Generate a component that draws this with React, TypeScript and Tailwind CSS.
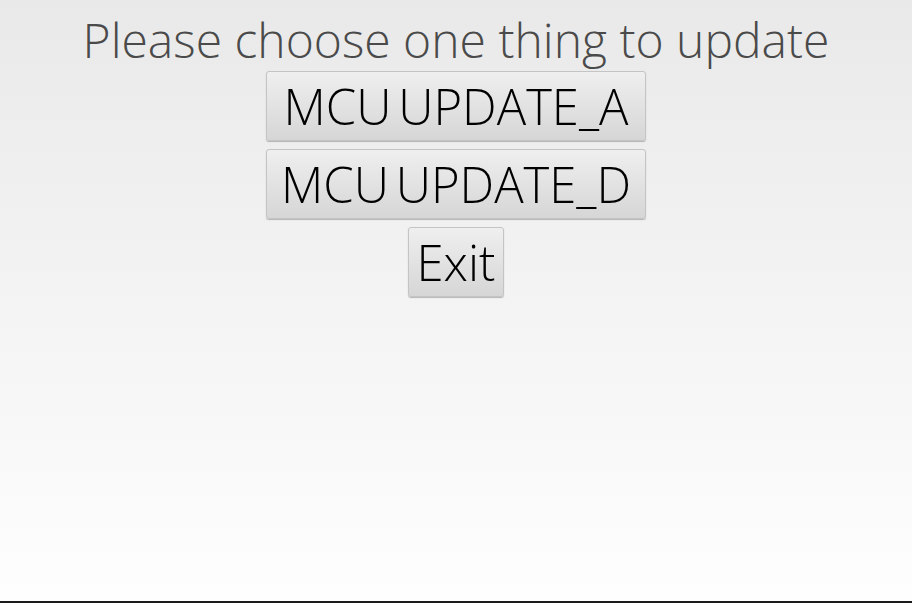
export default function App() {
  const btn =
    "flex items-center justify-center h-[70px] rounded-[3px] border border-[#c4c4c4] bg-gradient-to-b from-[#efefef] to-[#d6d6d6] shadow-[0_1px_1px_rgba(0,0,0,0.25)] text-[49px] leading-none font-light [word-spacing:-6px] text-black";
  return (
    <div
      className="relative w-[912px] h-[605px] overflow-hidden bg-gradient-to-b from-[#e9e9e9] to-[#fefefe]"
      style={{ fontFamily: '"Open Sans", sans-serif' }}
    >
      <div className="flex flex-col items-center pt-[14px]">
        <div className="text-[48px] leading-[52px] font-light text-[#4a4a4a]">
          Please choose one thing to update
        </div>
        <div className="mt-[5px] flex flex-col items-center gap-[8px]">
          <button className={btn + " w-[380px]"}>MCU UPDATE_A</button>
          <button className={btn + " w-[380px]"}>MCU UPDATE_D</button>
          <button className={btn + " w-[96px]"}>Exit</button>
        </div>
      </div>
      <div className="absolute left-0 right-0 bottom-[2px] h-[2px] bg-[#1a1a1a]" />
    </div>
  );
}
